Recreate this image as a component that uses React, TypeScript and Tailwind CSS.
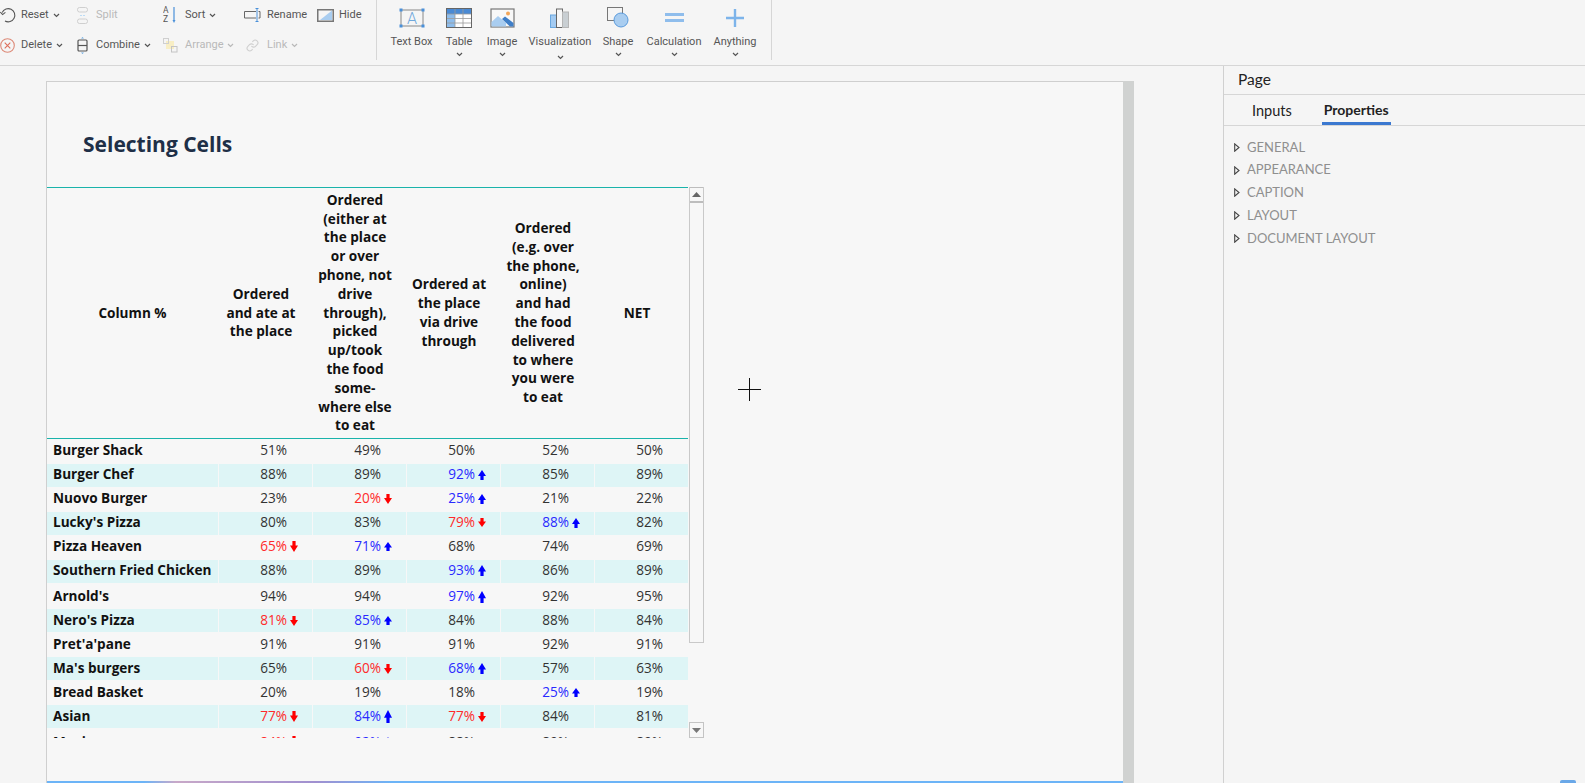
import React from "react";

const ROWS: [string, string[]][] = [
  ["Burger Shack", ["51%", "49%", "50%", "52%", "50%"]],
  ["Burger Chef", ["88%", "89%", "92%u10", "85%", "89%"]],
  ["Nuovo Burger", ["23%", "20%d10", "25%u10", "21%", "22%"]],
  ["Lucky's Pizza", ["80%", "83%", "79%d9", "88%u10", "82%"]],
  ["Pizza Heaven", ["65%d11", "71%u9", "68%", "74%", "69%"]],
  ["Southern Fried Chicken", ["88%", "89%", "93%u11", "86%", "89%"]],
  ["Arnold's", ["94%", "94%", "97%u12", "92%", "95%"]],
  ["Nero's Pizza", ["81%d10", "85%u9", "84%", "88%", "84%"]],
  ["Pret'a'pane", ["91%", "91%", "91%", "92%", "91%"]],
  ["Ma's burgers", ["65%", "60%d10", "68%u11", "57%", "63%"]],
  ["Bread Basket", ["20%", "19%", "18%", "25%u9", "19%"]],
  ["Asian", ["77%d11", "84%u13", "77%d10", "84%", "81%"]],
  ["Mexican", ["84%d13", "92%u11", "88%", "89%", "89%"]],
];

const HEADERS = [
  ["Ordered", "and ate at", "the place"],
  ["Ordered", "(either at", "the place", "or over", "phone, not", "drive", "through),", "picked", "up/took", "the food", "some-", "where else", "to eat"],
  ["Ordered at", "the place", "via drive", "through"],
  ["Ordered", "(e.g. over", "the phone,", "online)", "and had", "the food", "delivered", "to where", "you were", "to eat"],
  ["NET"],
];

function Arrow({ dir, h }: { dir: string; h: number }) {
  return (
    <svg width="8" height={h} viewBox="0 0 8 10" preserveAspectRatio="none" className="ml-[3px] shrink-0">
      {dir === "u" ? (
        <path d="M4 0 L8 6 H5.6 V10 H2.4 V6 H0 Z" fill="#0000ff" />
      ) : (
        <path d="M4 10 L8 4 H5.6 V0 H2.4 V4 H0 Z" fill="#ff0000" />
      )}
    </svg>
  );
}

function Cell({ value, pad }: { value: string; pad: string }) {
  const m = value.match(/^(\d+%)([ud])?(\d+)?$/)!;
  const color = m[2] === "u" ? "text-[#2a2aff]" : m[2] === "d" ? "text-[#ff2a2a]" : "text-[#333333]";
  return (
    <div className={"flex items-center border-l border-[#f7f7f7] " + pad}>
      <span className={"w-[68px] text-right " + color}>{m[1]}</span>
      {m[2] && <Arrow dir={m[2]} h={Number(m[3])} />}
    </div>
  );
}

function Chevron({ className = "" }: { className?: string }) {
  return (
    <svg width="7" height="5" viewBox="0 0 7 5" className={className}>
      <path d="M1 1 L3.5 3.5 L6 1" fill="none" stroke="currentColor" strokeWidth="1.2" />
    </svg>
  );
}

function Tool({ icon, label, box, off, chevron }: { icon: React.ReactNode; label: string; box: string; off?: boolean; chevron?: boolean }) {
  return (
    <div className={"flex items-center " + (off ? "text-[#b9b9b9]" : "text-[#555555]")}>
      <span className={"flex shrink-0 items-center " + box}>{icon}</span>
      <span>{label}</span>
      {chevron && <Chevron className="ml-[4px]" />}
    </div>
  );
}

function Insert({ icon, label, width, low }: { icon: React.ReactNode; label: string; width: string; low?: boolean }) {
  return (
    <div className={"flex flex-col items-center pt-[7px] text-[#555555] " + width}>
      <span className="flex h-[21px] items-center justify-center">{icon}</span>
      <span className="mt-[7px] leading-[14px] whitespace-nowrap">{label}</span>
      {label !== "Text Box" && <Chevron className={low ? "mt-[6px]" : "mt-[3px]"} />}
    </div>
  );
}

const ICONS = {
  reset: (
    <svg width="16" height="16" viewBox="0 0 16 16">
      <path d="M2.2 5.5 A6.6 6.6 0 1 1 5 14" fill="none" stroke="#555" strokeWidth="1.1" />
      <path d="M0.3 5 L2.6 7.6 L5.4 5.4" fill="none" stroke="#555" strokeWidth="1.1" />
    </svg>
  ),
  split: (
    <svg width="11" height="17" viewBox="0 0 11 17">
      <rect x="0.5" y="0.5" width="10" height="4.5" rx="2" fill="none" stroke="#cfcfcf" />
      <rect x="0.5" y="12" width="10" height="4.5" rx="2" fill="none" stroke="#cfcfcf" />
      <path d="M3 8.5 H8" stroke="#bcdcf5" strokeWidth="1.2" strokeDasharray="2 1" />
    </svg>
  ),
  sort: (
    <svg width="16" height="18" viewBox="0 0 16 18">
      <text x="0" y="7" fontSize="8.5" fontFamily="Roboto, sans-serif" fill="#555">A</text>
      <text x="0" y="16" fontSize="8.5" fontFamily="Roboto, sans-serif" fill="#555">Z</text>
      <path d="M11 1 V15" stroke="#4a90d9" strokeWidth="1.2" />
      <path d="M9.5 14 L11 17 L12.5 14 Z" fill="#4a90d9" />
    </svg>
  ),
  rename: (
    <svg width="17" height="14" viewBox="0 0 17 14">
      <path d="M12 3.5 H0.5 V10 H12 M14.5 3.5 H16 V10 H14.5" fill="none" stroke="#666" />
      <path d="M13 1 V13 M11.5 0.5 H14.5 M11.5 13.5 H14.5" stroke="#4a90d9" />
    </svg>
  ),
  hide: (
    <svg width="17" height="13" viewBox="0 0 17 13">
      <rect x="0.75" y="0.75" width="15.5" height="11.5" fill="none" stroke="#777" strokeWidth="1.5" />
      <path d="M3 11 L15 1.5 V11 Z" fill="#a9cdf0" />
    </svg>
  ),
  del: (
    <svg width="15" height="15" viewBox="0 0 15 15">
      <circle cx="7.5" cy="7.5" r="6.8" fill="none" stroke="#dd8a78" strokeWidth="1.1" />
      <path d="M4.7 4.7 L10.3 10.3 M10.3 4.7 L4.7 10.3" stroke="#dd6f5c" strokeWidth="1.1" />
    </svg>
  ),
  combine: (
    <svg width="11" height="17" viewBox="0 0 11 17">
      <path d="M5.5 0 L7 1.5 H4 Z M5.5 17 L7 15.5 H4 Z" fill="#6aa8e0" />
      <rect x="1" y="3" width="9" height="11" rx="1" fill="none" stroke="#555" strokeWidth="1.2" />
      <path d="M1 8.5 H10" stroke="#555" strokeWidth="1.2" />
    </svg>
  ),
  arrange: (
    <svg width="15" height="15" viewBox="0 0 15 15">
      <rect x="3" y="3" width="8" height="8" fill="#f8eec4" />
      <rect x="0.5" y="0.5" width="5" height="5" fill="none" stroke="#cfcfcf" />
      <rect x="8.5" y="8.5" width="5.5" height="5.5" fill="none" stroke="#c4c4c4" />
    </svg>
  ),
  link: (
    <svg width="13" height="13" viewBox="0 0 24 24" fill="none" stroke="#cfcfcf" strokeWidth="2">
      <path d="M10 13a5 5 0 0 0 7.54.54l3-3a5 5 0 0 0-7.07-7.07l-1.72 1.71" />
      <path d="M14 11a5 5 0 0 0-7.54-.54l-3 3a5 5 0 0 0 7.07 7.07l1.71-1.71" />
    </svg>
  ),
  textBox: (
    <svg width="26" height="20" viewBox="0 0 26 20">
      <rect x="2" y="2" width="22" height="16" fill="none" stroke="#888" />
      <rect x="0.5" y="0.5" width="3" height="3" fill="#4a90d9" />
      <rect x="22.5" y="0.5" width="3" height="3" fill="#4a90d9" />
      <rect x="0.5" y="16.5" width="3" height="3" fill="#4a90d9" />
      <rect x="22.5" y="16.5" width="3" height="3" fill="#4a90d9" />
      <text x="13" y="16" textAnchor="middle" fontSize="16" fontWeight="300" fontFamily="Roboto, sans-serif" fill="#6fa8dc">A</text>
    </svg>
  ),
  table: (
    <svg width="26" height="20" viewBox="0 0 26 20">
      <rect x="0.5" y="0.5" width="25" height="19" fill="#ffffff" stroke="#666" />
      <rect x="1" y="1" width="24" height="5" fill="#4a8ad4" />
      <rect x="1" y="6" width="8" height="13" fill="#8ebdec" />
      <path d="M9 1 V19 M17 1 V19 M1 6 H25 M1 10.5 H25 M1 15 H25" stroke="#9a9a9a" strokeWidth="0.8" />
    </svg>
  ),
  image: (
    <svg width="25" height="20" viewBox="0 0 25 20">
      <rect x="1" y="1" width="23" height="18" fill="#f8f8f8" stroke="#777" strokeWidth="1.2" />
      <circle cx="18" cy="5.5" r="2" fill="#f2a65a" />
      <path d="M1.5 18.5 V14 L8 8 L16 15 L16 18.5 Z" fill="#a9cdf0" />
      <path d="M12 11 L15 8.5 L23.5 15 V18.5 H20 Z" fill="#3f7fc8" />
    </svg>
  ),
  viz: (
    <svg width="20" height="20" viewBox="0 0 20 20">
      <rect x="0.5" y="7" width="6" height="12.5" fill="#a3cbf2" stroke="#6aa8e0" />
      <rect x="6.5" y="1" width="6" height="18.5" fill="#f7f7f7" stroke="#666" />
      <rect x="12.5" y="4" width="6" height="15.5" fill="#c9cfd3" stroke="#b5b5b5" />
    </svg>
  ),
  shape: (
    <svg width="22" height="21" viewBox="0 0 22 21">
      <rect x="0.5" y="0.5" width="15" height="13" fill="none" stroke="#777" />
      <circle cx="14" cy="13" r="7" fill="#a9cdf0" stroke="#5b9bdc" />
    </svg>
  ),
  calc: (
    <svg width="19" height="9" viewBox="0 0 19 9">
      <rect x="0" y="0" width="19" height="3" fill="#8fbdec" />
      <rect x="0" y="6" width="19" height="3" fill="#8fbdec" />
    </svg>
  ),
  plus: (
    <svg width="18" height="18" viewBox="0 0 18 18">
      <path d="M9 0 V18 M0 9 H18" stroke="#7db4ea" strokeWidth="2.4" />
    </svg>
  ),
};

export default function App() {
  return (
    <div className="relative flex h-[783px] w-[1585px] flex-col overflow-hidden bg-[#f5f5f5]">
      {/* ribbon */}
      <div className="flex h-[66px] shrink-0 border-b border-[#d6d6d6] font-['Roboto',sans-serif] text-[11px]">
        <div className="grid h-[60px] w-[377px] grid-cols-[77px_86px_81px_73px_1fr] grid-rows-[30px_30px] border-r border-[#d6d6d6]">
          <Tool icon={ICONS.reset} label="Reset" box="w-[21px]" chevron />
          <Tool icon={ICONS.split} label="Split" box="w-[19px]" off />
          <Tool icon={ICONS.sort} label="Sort" box="w-[22px]" chevron />
          <Tool icon={ICONS.rename} label="Rename" box="w-[23px]" />
          <Tool icon={ICONS.hide} label="Hide" box="w-[22px]" />
          <Tool icon={ICONS.del} label="Delete" box="w-[21px]" chevron />
          <Tool icon={ICONS.combine} label="Combine" box="w-[19px]" chevron />
          <Tool icon={ICONS.arrange} label="Arrange" box="w-[22px]" off chevron />
          <Tool icon={ICONS.link} label="Link" box="w-[23px] pl-[2px]" off chevron />
        </div>
        <div className="flex h-[60px] w-[395px] border-r border-[#d6d6d6] pl-[11px]">
          <Insert icon={ICONS.textBox} label="Text Box" width="w-[47px]" />
          <Insert icon={ICONS.table} label="Table" width="w-[48px]" />
          <Insert icon={ICONS.image} label="Image" width="w-[38px]" />
          <Insert icon={ICONS.viz} label="Visualization" width="w-[78px]" low />
          <Insert icon={ICONS.shape} label="Shape" width="w-[38px]" />
          <Insert icon={ICONS.calc} label="Calculation" width="w-[74px]" />
          <Insert icon={ICONS.plus} label="Anything" width="w-[48px]" />
        </div>
      </div>

      <div className="flex min-h-0 flex-1">
        {/* canvas */}
        <div className="flex w-[1223px] shrink-0 pt-[15px] pl-[46px]">
          <div className="flex w-[1077px] flex-col border-t border-l border-[#cfcfcf] bg-[#f7f7f7] font-['Open_Sans',sans-serif] text-[13.6px] leading-[18.8px]">
            <div className="h-[105px] pt-[47px] pl-[36px] text-[21px] leading-[30px] font-bold text-[#1e2f47]">
              Selecting Cells
            </div>
            <div className="flex h-[551px]">
              <div className="h-full w-[641px] overflow-hidden">
                <div className="grid h-[252px] grid-cols-[171px_94px_94px_94px_94px_94px] border-y border-[#1ab3ab] font-bold text-[#111111]">
                  <div className="flex items-center justify-center">Column %</div>
                  {HEADERS.map((lines, i) => (
                    <div key={i} className="flex flex-col items-center justify-center pr-[8px] text-center">
                      {lines.map((line, j) => (
                        <span key={j} className="whitespace-nowrap">{line}</span>
                      ))}
                    </div>
                  ))}
                </div>
                <div className="pt-px">
                  {ROWS.map(([name, cells], i) => {
                    // text sits a little lower in the band further down the table
                    const pad = i === 12 ? "pt-[4px]" : i >= 6 ? "" : "pb-[2px]";
                    return (
                      <div key={name} className={i === 6 ? "pt-px pb-px" : "pb-px"}>
                        <div className={"grid h-[23px] grid-cols-[171px_94px_94px_94px_94px_94px] items-stretch " + (i % 2 === 1 ? "bg-[#def5f6]" : "")}>
                          <div className={"flex items-center pl-[6px] font-bold text-[#111111] " + pad}>{name}</div>
                          {cells.map((c, j) => (
                            <Cell key={j} value={c} pad={pad} />
                          ))}
                        </div>
                      </div>
                    );
                  })}
                </div>
              </div>
              {/* scroll bar */}
              <div className="relative ml-px h-full w-[15px]">
                <div className="h-[456px] border-x border-b border-[#c9c9c9]">
                  <div className="flex h-[16px] items-center justify-center border-t border-b-2 border-[#bdbdbd]">
                    <svg width="9" height="5" viewBox="0 0 9 5"><path d="M4.5 0 L9 5 H0 Z" fill="#666" /></svg>
                  </div>
                </div>
                <div className="mt-[79px] flex h-[16px] items-center justify-center border border-[#c4c4c4]">
                  <svg width="9" height="5" viewBox="0 0 9 5"><path d="M4.5 5 L9 0 H0 Z" fill="#777" /></svg>
                </div>
              </div>
            </div>
            <div className="mt-auto h-[2px] bg-[linear-gradient(90deg,#6cb4f7_0%,#6cb4f7_9%,#c8a8c8_12%,#a090d0_25%,#6cb4f7_32%,#6cb4f7_100%)]" />
          </div>
          <div className="h-full w-[11px] bg-[#d0d2d1]" />
        </div>

        {/* right panel */}
        <div className="flex-1 border-l border-[#d0d0d0] font-['Lato',sans-serif] text-[#222222]">
          <div className="flex h-[29px] items-center border-b border-[#d6d6d6] pl-[14px] text-[15.5px]">Page</div>
          <div className="flex h-[31px] border-b border-[#d6d6d6] pl-[28px] text-[14.5px]">
            <span className="flex items-center pt-[1px]">Inputs</span>
            <span className="ml-[30px] flex items-center border-b-[3px] border-[#3b78d0] px-[2px] pt-[2px] text-[14px] font-bold">Properties</span>
          </div>
          <div className="flex flex-col pt-[10px] text-[13px] text-[#8f8f8f]">
            {["GENERAL", "APPEARANCE", "CAPTION", "LAYOUT", "DOCUMENT LAYOUT"].map((s) => (
              <div key={s} className="flex h-[22.8px] items-center pl-[10px]">
                <svg width="6" height="9" viewBox="0 0 6 9" className="mr-[7px]">
                  <path d="M0.7 0.8 L5 4.5 L0.7 8.2 Z" fill="none" stroke="#444" strokeWidth="1.1" />
                </svg>
                {s}
              </div>
            ))}
          </div>
        </div>
      </div>

      {/* crosshair pointer and the sliver of the corner widget */}
      <svg width="23" height="23" viewBox="0 0 23 23" className="absolute top-[378px] left-[738px]">
        <path d="M11.5 0 V23 M0 11.5 H23" stroke="#111" strokeWidth="1" />
      </svg>
      <div className="absolute top-[780px] left-[1560px] h-[3px] w-[16px] rounded-t-[2px] bg-[#6aa8e8]" />
    </div>
  );
}
